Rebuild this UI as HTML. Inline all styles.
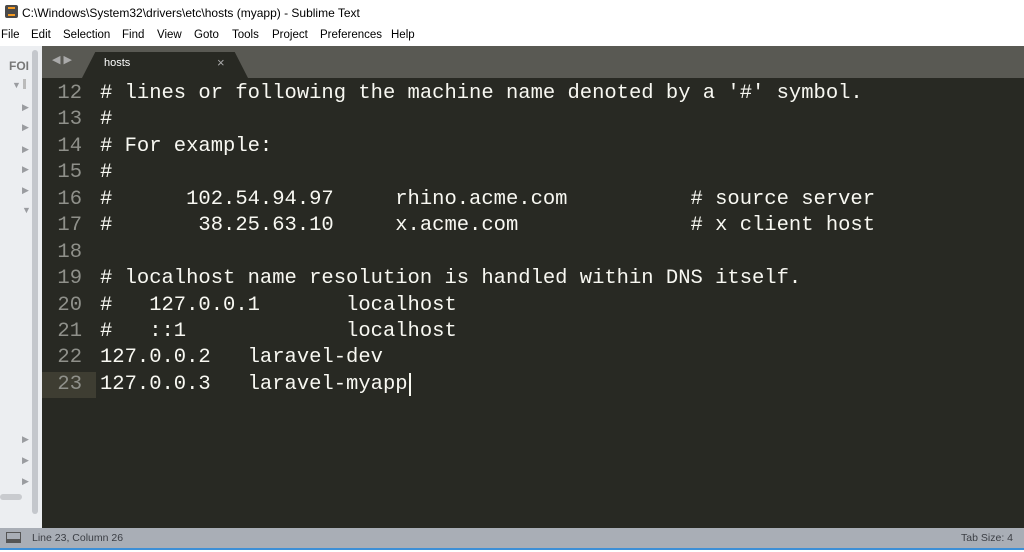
<!DOCTYPE html><html><head><style>
*{margin:0;padding:0;box-sizing:border-box}
body{width:1024px;height:552px;overflow:hidden;background:#fff;font-family:"Liberation Sans",sans-serif;position:relative}
.abs{position:absolute}
#title{left:0;top:0;width:1024px;height:25px;background:#fff;font-size:12px;color:#000}
#menu{left:0;top:25px;width:1024px;height:21px;font-size:11.5px;color:#000}
#menu span{position:absolute;top:4px}
#side{left:0;top:46px;width:42px;height:482px;background:#eceef1}
#editor{left:42px;top:46px;width:982px;height:482px;background:#282923}
#tabbar{left:42px;top:46px;width:982px;height:32px;background:#595953}
#tab{left:82px;top:52px;width:166px;height:26px;background:#282923;clip-path:polygon(8% 0,92% 0,100% 100%,0 100%)}
#code{left:42px;top:81px;font-family:"Liberation Mono",monospace;font-size:20.5px;line-height:26.45px;color:#f8f8f2}
.ln{display:inline-block;width:40px;text-align:right;color:#8f908a;margin-right:18px}
.row{height:26.45px;white-space:pre}
.cur{background:#3e3d32;display:inline-block}
#status{left:0;top:528px;width:1024px;height:20px;background:#a9aeb6;font-size:10.5px;color:#3b3e44}
#bl{left:0;top:548px;width:1024px;height:2px;background:#3d8fd6}
.ar{position:absolute;left:22px;font-size:9px;color:#9a9ca0}
</style></head><body>
<div id="title" class="abs"><div class="abs" style="left:5px;top:5px;width:13px;height:13px;background:#4a4a4a;border-radius:2px"><div style="margin:2px 3px;width:7px;height:9px;border:2px solid #f59b23;border-width:2px 0"></div></div><span class="abs" style="left:22px;top:6px">C:\Windows\System32\drivers\etc\hosts (myapp) - Sublime Text</span></div>
<div id="menu" class="abs"><span style="left:1px">File</span><span style="left:31px">Edit</span><span style="left:63px">Selection</span><span style="left:122px">Find</span><span style="left:157px">View</span><span style="left:194px">Goto</span><span style="left:232px">Tools</span><span style="left:272px">Project</span><span style="left:320px">Preferences</span><span style="left:391px">Help</span></div>
<div id="side" class="abs"><div class="abs" style="left:32px;top:4px;width:6px;height:464px;background:#c4c7cc;border-radius:3px"></div><span class="abs" style="left:9px;top:13px;font-size:12px;color:#777;font-weight:bold">FOI</span>
<div class="abs" style="left:0;top:448px;width:22px;height:6px;background:#c9cbcf;border-radius:3px"></div>
<span class="ar" style="left:12px;top:34px">▼</span><span class="abs" style="left:23px;top:33px;width:3px;height:10px;background:#bbb"></span>
<span class="ar" style="top:56px">▶</span><span class="ar" style="top:76px">▶</span><span class="ar" style="top:98px">▶</span><span class="ar" style="top:118px">▶</span><span class="ar" style="top:139px">▶</span><span class="ar" style="top:159px">▼</span>
<span class="ar" style="top:388px">▶</span><span class="ar" style="top:409px">▶</span><span class="ar" style="top:430px">▶</span></div>
<div id="editor" class="abs"></div>
<div id="tabbar" class="abs"><span class="abs" style="left:10px;top:7px;color:#aaa;font-size:11px">◀ ▶</span></div>
<div id="tab" class="abs"><span class="abs" style="left:22px;top:5px;color:#fff;font-size:11px">hosts</span><span class="abs" style="left:135px;top:3px;color:#aaa;font-size:13px">×</span></div>
<div id="code" class="abs"><div class="row"><span class="ln">12</span># lines or following the machine name denoted by a '#' symbol.</div><div class="row"><span class="ln">13</span>#</div><div class="row"><span class="ln">14</span># For example:</div><div class="row"><span class="ln">15</span>#</div><div class="row"><span class="ln">16</span>#      102.54.94.97     rhino.acme.com          # source server</div><div class="row"><span class="ln">17</span>#       38.25.63.10     x.acme.com              # x client host</div><div class="row"><span class="ln">18</span></div><div class="row"><span class="ln">19</span># localhost name resolution is handled within DNS itself.</div><div class="row"><span class="ln">20</span>#   127.0.0.1       localhost</div><div class="row"><span class="ln">21</span>#   ::1             localhost</div><div class="row"><span class="ln">22</span>127.0.0.2   laravel-dev</div><div class="row"><span class="ln cur" style="width:54px;margin-right:4px;padding-right:14px">23</span>127.0.0.3   laravel-myapp<span style="border-left:2px solid #f8f8f0;margin-left:1px"></span></div></div>
<div id="status" class="abs"><div class="abs" style="left:6px;top:4px;width:15px;height:11px;border:1px solid #555;border-bottom-width:4px"></div><span class="abs" style="left:32px;top:4px">Line 23, Column 26</span><span class="abs" style="right:11px;top:4px">Tab Size: 4</span></div>
<div id="bl" class="abs"></div>
</body></html>
